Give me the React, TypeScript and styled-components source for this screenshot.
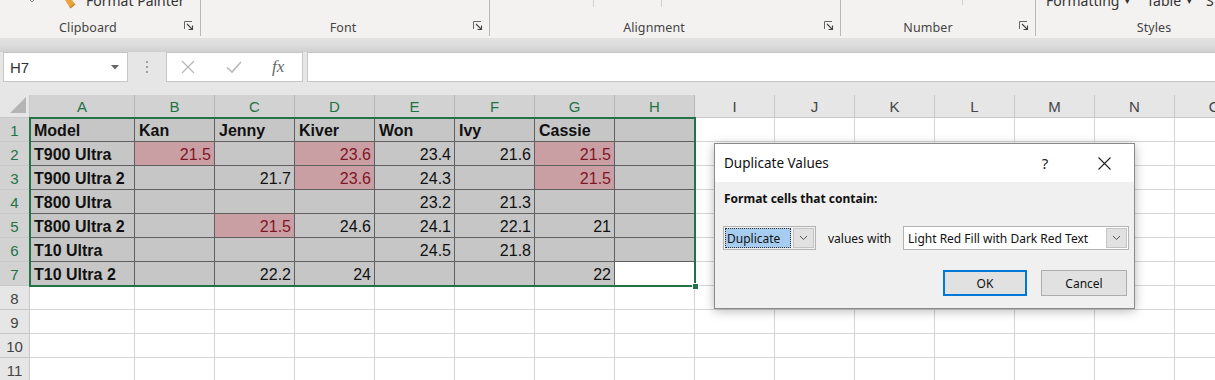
import styled, { createGlobalStyle } from "styled-components";

// == STYLES START ==
const GlobalStyle = createGlobalStyle`
  html, body {
    margin: 0;
    padding: 0;
    background: #ffffff;
    overflow: hidden;
  }
  body {
    font-family: "Liberation Sans", Arial, sans-serif;
  }
`;

const Page = styled.div`
  position: relative;
  width: 1215px;
  height: 380px;
  overflow: hidden;
  background: #e6e6e6;
`;

const Ribbon = styled.div`
  display: flex;
  height: 38px;
  background: #f3f2f1;
  font-family: "Noto Sans", "Open Sans", sans-serif;
  color: #444444;
`;

const Group = styled.div<{ $width: number; $last?: boolean }>`
  display: flex;
  flex-direction: column;
  width: ${(p) => p.$width}px;
  flex-shrink: 0;
  border-right: ${(p) => (p.$last ? "none" : "1px solid #b9b7b5")};
  margin-bottom: 2px;
`;

const GroupTop = styled.div<{ $pad: number }>`
  display: flex;
  align-items: flex-start;
  height: 21px;
  padding-left: ${(p) => p.$pad}px;
  overflow: hidden;
`;

const GroupLabel = styled.div`
  flex: 1;
  display: flex;
  align-items: center;
  justify-content: center;
  position: relative;
  padding-top: 3px;
  font-size: 12.5px;
  letter-spacing: 0.1px;
`;

const Launcher = styled.svg`
  position: absolute;
  right: 6px;
  top: 5px;
`;

const CutText = styled.span<{ $ml?: number }>`
  margin-left: ${(p) => p.$ml ?? 0}px;
  margin-top: -7px;
  font-size: 14px;
  line-height: 16px;
  white-space: nowrap;
  color: #333;
`;

const TinySep = styled.span<{ $ml: number; $h: number }>`
  margin-left: ${(p) => p.$ml}px;
  width: 1px;
  height: ${(p) => p.$h}px;
  background: #d0cfce;
  flex-shrink: 0;
`;

const Band = styled.div`
  height: 14px;
  background: linear-gradient(#e2e2e2 0%, #dcdcdc 55%, #cfcfcf 100%);
`;

const FormulaBar = styled.div`
  display: flex;
  align-items: stretch;
  height: 30px;
  padding: 0 0 0 3px;
  background: #e6e6e6;
`;

const NameBox = styled.div`
  display: flex;
  align-items: center;
  justify-content: space-between;
  width: 125px;
  box-sizing: border-box;
  background: #ffffff;
  border: 1px solid #c6c6c6;
  padding: 0 8px 0 6px;
  font-size: 15px;
  color: #333;
`;

const Grip = styled.div`
  width: 38px;
  display: flex;
  flex-direction: column;
  align-items: center;
  justify-content: center;
  gap: 3px;
`;

const Dot = styled.span`
  width: 2px;
  height: 2px;
  background: #a0a0a0;
`;

const FxBox = styled.div`
  display: flex;
  align-items: center;
  width: 137px;
  box-sizing: border-box;
  background: #ffffff;
  border: 1px solid #c6c6c6;
  padding-left: 14px;
  gap: 31px;
`;

const FxLabel = styled.span`
  font-family: "Liberation Serif", "Times New Roman", serif;
  font-style: italic;
  font-size: 17px;
  color: #666;
  margin-left: -1px;
`;

const FormulaInput = styled.div`
  flex: 1;
  margin-left: 4px;
  background: #ffffff;
  border: 1px solid #c6c6c6;
  border-right: none;
`;

const Spacer = styled.div`
  height: 13px;
  background: #e6e6e6;
`;

const GridWrap = styled.div`
  position: relative;
  background: #ffffff;
`;

const Grid = styled.div`
  display: grid;
  grid-template-columns: 30px 105px repeat(13, 80px) 80px;
  grid-template-rows: 23px repeat(11, 24px);
`;

const Corner = styled.div`
  background: #e6e6e6;
  border-right: 1px solid #c8c8c8;
  border-bottom: 1px solid #c8c8c8;
  box-sizing: border-box;
  position: relative;
`;

const CornerTriangle = styled.svg`
  position: absolute;
  right: 3px;
  bottom: 4px;
`;

const ColHead = styled.div<{ $sel?: boolean }>`
  display: flex;
  align-items: center;
  justify-content: center;
  box-sizing: border-box;
  background: ${(p) => (p.$sel ? "#d2d2d2" : "#e6e6e6")};
  color: ${(p) => (p.$sel ? "#217346" : "#444444")};
  border-right: 1px solid ${(p) => (p.$sel ? "#b6b6b6" : "#c8c8c8")};
  border-bottom: 1px solid #c8c8c8;
  font-size: 15px;
`;

const RowHead = styled(ColHead)`
  padding-top: 1px;
`;

const Cell = styled.div<{
  $sel?: boolean;
  $dup?: boolean;
  $bold?: boolean;
  $num?: boolean;
}>`
  display: flex;
  align-items: center;
  justify-content: ${(p) => (p.$num ? "flex-end" : "flex-start")};
  box-sizing: border-box;
  padding: 2px 3px 0 4px;
  overflow: hidden;
  white-space: nowrap;
  font-size: 16px;
  font-weight: ${(p) => (p.$bold ? 700 : 400)};
  background: ${(p) => (p.$dup ? "#c99fa4" : p.$sel ? "#c6c6c6" : "#ffffff")};
  color: ${(p) => (p.$dup ? "#7f1526" : "#111111")};
  border-right: 1px solid ${(p) => (p.$sel ? "#5f5f5f" : "#d4d4d4")};
  border-bottom: 1px solid ${(p) => (p.$sel ? "#5f5f5f" : "#d4d4d4")};
`;

const Selection = styled.div`
  position: absolute;
  left: 29px;
  top: 22px;
  width: 667px;
  height: 170px;
  box-sizing: border-box;
  border: 2px solid #217346;
  pointer-events: none;
`;

const FillHandle = styled.div`
  position: absolute;
  right: -5px;
  bottom: -5px;
  width: 5px;
  height: 5px;
  background: #217346;
  border: 1px solid #ffffff;
`;

const Dialog = styled.div`
  position: absolute;
  left: 714px;
  top: 143px;
  width: 421px;
  height: 166px;
  box-sizing: border-box;
  border: 1px solid #8a8a8a;
  background: #f0f0f0;
  box-shadow: 0 2px 10px rgba(0, 0, 0, 0.28);
  font-family: "Noto Sans", "Open Sans", sans-serif;
  color: #111;
  display: flex;
  flex-direction: column;
`;

const TitleBar = styled.div`
  display: flex;
  align-items: center;
  height: 38px;
  background: #ffffff;
  padding-left: 9px;
`;

const Title = styled.div`
  flex: 1;
  font-size: 13.5px;
`;

const TitleButton = styled.div<{ $w: number }>`
  width: ${(p) => p.$w}px;
  display: flex;
  align-items: center;
  justify-content: center;
  font-size: 15px;
  color: #222;
`;

const Body = styled.div`
  display: flex;
  flex-direction: column;
  padding: 8px 7px 0 8px;
`;

const Prompt = styled.div`
  font-size: 12px;
  font-weight: 700;
  margin-left: 1px;
`;

const ComboRow = styled.div`
  display: flex;
  align-items: center;
  margin-top: 19px;
  height: 24px;
`;

const Combo = styled.div<{ $w: number; $white?: boolean }>`
  display: flex;
  align-items: stretch;
  flex-shrink: 0;
  width: ${(p) => p.$w}px;
  height: 24px;
  box-sizing: border-box;
  border: 1px solid #b4b4b4;
  background: ${(p) => (p.$white ? "#ffffff" : "#f0f0f0")};
  padding: 1px;
`;

const ComboText = styled.div<{ $hi?: boolean }>`
  flex: 1;
  display: flex;
  align-items: center;
  font-size: 12px;
  white-space: nowrap;
  padding-left: ${(p) => (p.$hi ? 2 : 3)}px;
  background: ${(p) => (p.$hi ? "#a6cdf0" : "transparent")};
  outline: ${(p) => (p.$hi ? "1px dotted #333" : "none")};
  outline-offset: -1px;
  margin-right: 2px;
`;

const ComboButton = styled.div`
  width: 21px;
  display: flex;
  align-items: center;
  justify-content: center;
  background: #e1e1e1;
  border: 1px solid #c4c4c4;
  box-sizing: border-box;
`;

const Between = styled.div`
  font-size: 12px;
  white-space: nowrap;
  flex-shrink: 0;
  width: 63px;
  margin: 0 12px 0 12px;
`;

const ButtonRow = styled.div`
  display: flex;
  justify-content: flex-end;
  gap: 14px;
  margin-top: 20px;
`;

const Button = styled.div<{ $primary?: boolean; $w: number }>`
  width: ${(p) => p.$w}px;
  height: 26px;
  box-sizing: border-box;
  display: flex;
  align-items: center;
  justify-content: center;
  font-size: 12px;
  background: #e1e1e1;
  border: ${(p) => (p.$primary ? "2px solid #0078d7" : "1px solid #adadad")};
`;
// == STYLES END ==

// == DATA ==
type CellData = { v: string; dup?: boolean };

const headers = ["Model", "Kan", "Jenny", "Kiver", "Won", "Ivy", "Cassie", ""];

const rows: CellData[][] = [
  [{ v: "T900 Ultra" }, { v: "21.5", dup: true }, { v: "" }, { v: "23.6", dup: true }, { v: "23.4" }, { v: "21.6" }, { v: "21.5", dup: true }, { v: "" }],
  [{ v: "T900 Ultra 2" }, { v: "" }, { v: "21.7" }, { v: "23.6", dup: true }, { v: "24.3" }, { v: "" }, { v: "21.5", dup: true }, { v: "" }],
  [{ v: "T800 Ultra" }, { v: "" }, { v: "" }, { v: "" }, { v: "23.2" }, { v: "21.3" }, { v: "" }, { v: "" }],
  [{ v: "T800 Ultra 2" }, { v: "" }, { v: "21.5", dup: true }, { v: "24.6" }, { v: "24.1" }, { v: "22.1" }, { v: "21" }, { v: "" }],
  [{ v: "T10 Ultra" }, { v: "" }, { v: "" }, { v: "" }, { v: "24.5" }, { v: "21.8" }, { v: "" }, { v: "" }],
  [{ v: "T10 Ultra 2" }, { v: "" }, { v: "22.2" }, { v: "24" }, { v: "" }, { v: "" }, { v: "22" }, { v: "" }],
];

const columns = ["A", "B", "C", "D", "E", "F", "G", "H", "I", "J", "K", "L", "M", "N", "O"];

const LauncherIcon = () => (
  <Launcher width="10" height="10" viewBox="0 0 10 10">
    <path d="M0.5 8 V0.5 H8" fill="none" stroke="#666" strokeWidth="1" />
    <path d="M3 3 L8.5 8.5 M4.5 8.5 H8.5 V4.5" fill="none" stroke="#444" strokeWidth="1.1" />
  </Launcher>
);

const Chevron = () => (
  <svg width="9" height="6" viewBox="0 0 9 6">
    <path d="M1 1 L4.5 4.5 L8 1" fill="none" stroke="#555" strokeWidth="1" />
  </svg>
);

export default function App() {
  return (
    <>
      <GlobalStyle />
      <Page>
        <Ribbon>
          <Group $width={200}>
            <GroupTop $pad={28}>
              <svg width="8" height="6" viewBox="0 0 8 6" style={{ marginTop: -2 }}>
                <path d="M1 1 L4 4 L7 1" fill="none" stroke="#888" strokeWidth="1" />
              </svg>
              <svg width="14" height="9" viewBox="0 0 14 9" style={{ marginLeft: 28 }}>
                <path d="M1 0 L8 0 L11 4 L6 8 Z" fill="#e8a33d" />
                <path d="M6 8 L11 4" stroke="#c97a1c" strokeWidth="1.2" />
              </svg>
              <CutText $ml={8}>Format Painter</CutText>
            </GroupTop>
            <GroupLabel>
              <span style={{ marginRight: 24 }}>Clipboard</span>
              <LauncherIcon />
            </GroupLabel>
          </Group>
          <Group $width={288}>
            <GroupTop $pad={0} />
            <GroupLabel>
              <span style={{ marginRight: 4 }}>Font</span>
              <LauncherIcon />
            </GroupLabel>
          </Group>
          <Group $width={350}>
            <GroupTop $pad={103}>
              <TinySep $ml={0} $h={7} />
              <TinySep $ml={67} $h={7} />
            </GroupTop>
            <GroupLabel>
              <span style={{ marginRight: 22 }}>Alignment</span>
              <LauncherIcon />
            </GroupLabel>
          </Group>
          <Group $width={194}>
            <GroupTop $pad={121}>
              <TinySep $ml={0} $h={5} />
            </GroupTop>
            <GroupLabel>
              <span style={{ marginRight: 20 }}>Number</span>
              <LauncherIcon />
            </GroupLabel>
          </Group>
          <Group $width={200} $last>
            <GroupTop $pad={10}>
              <CutText>Formatting</CutText>
              <CutText $ml={6} style={{ fontSize: 9 }}>▾</CutText>
              <CutText $ml={16}>Table</CutText>
              <CutText $ml={6} style={{ fontSize: 9 }}>▾</CutText>
              <CutText $ml={14}>S</CutText>
            </GroupTop>
            <GroupLabel>
              <span style={{ marginLeft: 36 }}>Styles</span>
            </GroupLabel>
          </Group>
        </Ribbon>
        <Band />
        <FormulaBar>
          <NameBox>
            <span>H7</span>
            <svg width="8" height="5" viewBox="0 0 8 5">
              <path d="M0 0 H8 L4 4.5 Z" fill="#666" />
            </svg>
          </NameBox>
          <Grip>
            <Dot />
            <Dot />
            <Dot />
          </Grip>
          <FxBox>
            <svg width="14" height="14" viewBox="0 0 14 14">
              <path d="M1 1 L13 13 M13 1 L1 13" stroke="#b8b8b8" strokeWidth="1.3" />
            </svg>
            <svg width="16" height="12" viewBox="0 0 16 12">
              <path d="M1 6.5 L6 11 L15 1" fill="none" stroke="#b8b8b8" strokeWidth="1.6" />
            </svg>
            <FxLabel>fx</FxLabel>
          </FxBox>
          <FormulaInput />
        </FormulaBar>
        <Spacer />
        <GridWrap>
          <Grid>
            <Corner>
              <CornerTriangle width="16" height="16" viewBox="0 0 16 16">
                <path d="M16 0 V16 H0 Z" fill="#b5b5b5" />
              </CornerTriangle>
            </Corner>
            {columns.map((c, i) => (
              <ColHead key={c} $sel={i < 8}>
                {c}
              </ColHead>
            ))}
            <RowHead $sel>1</RowHead>
            {headers.map((h, i) => (
              <Cell key={"h" + i} $sel $bold>
                {h}
              </Cell>
            ))}
            {columns.slice(8).map((c) => (
              <Cell key={"r1" + c} />
            ))}
            {rows.map((r, ri) => (
              <>
                <RowHead key={"rh" + ri} $sel>
                  {ri + 2}
                </RowHead>
                {r.map((cell, ci) => (
                  <Cell
                    key={ri + "-" + ci}
                    $sel={!(ri === 5 && ci === 7)}
                    $dup={cell.dup}
                    $bold={ci === 0}
                    $num={ci > 0}
                  >
                    {cell.v}
                  </Cell>
                ))}
                {columns.slice(8).map((c) => (
                  <Cell key={ri + c} />
                ))}
              </>
            ))}
            {[8, 9, 10, 11].map((n) => (
              <>
                <RowHead key={"rh" + n}>{n}</RowHead>
                {columns.map((c) => (
                  <Cell key={n + c} />
                ))}
              </>
            ))}
          </Grid>
          <Selection>
            <FillHandle />
          </Selection>
        </GridWrap>
        <Dialog>
          <TitleBar>
            <Title>Duplicate Values</Title>
            <TitleButton $w={58}>?</TitleButton>
            <TitleButton $w={60}>
              <svg width="13" height="13" viewBox="0 0 13 13">
                <path d="M0.5 0.5 L12.5 12.5 M12.5 0.5 L0.5 12.5" stroke="#222" strokeWidth="1.1" />
              </svg>
            </TitleButton>
          </TitleBar>
          <Body>
            <Prompt>Format cells that contain:</Prompt>
            <ComboRow>
              <Combo $w={93}>
                <ComboText $hi>Duplicate</ComboText>
                <ComboButton>
                  <Chevron />
                </ComboButton>
              </Combo>
              <Between>values with</Between>
              <Combo $w={226} $white>
                <ComboText>Light Red Fill with Dark Red Text</ComboText>
                <ComboButton>
                  <Chevron />
                </ComboButton>
              </Combo>
            </ComboRow>
            <ButtonRow>
              <Button $primary $w={84}>
                OK
              </Button>
              <Button $w={86}>Cancel</Button>
            </ButtonRow>
          </Body>
        </Dialog>
      </Page>
    </>
  );
}
